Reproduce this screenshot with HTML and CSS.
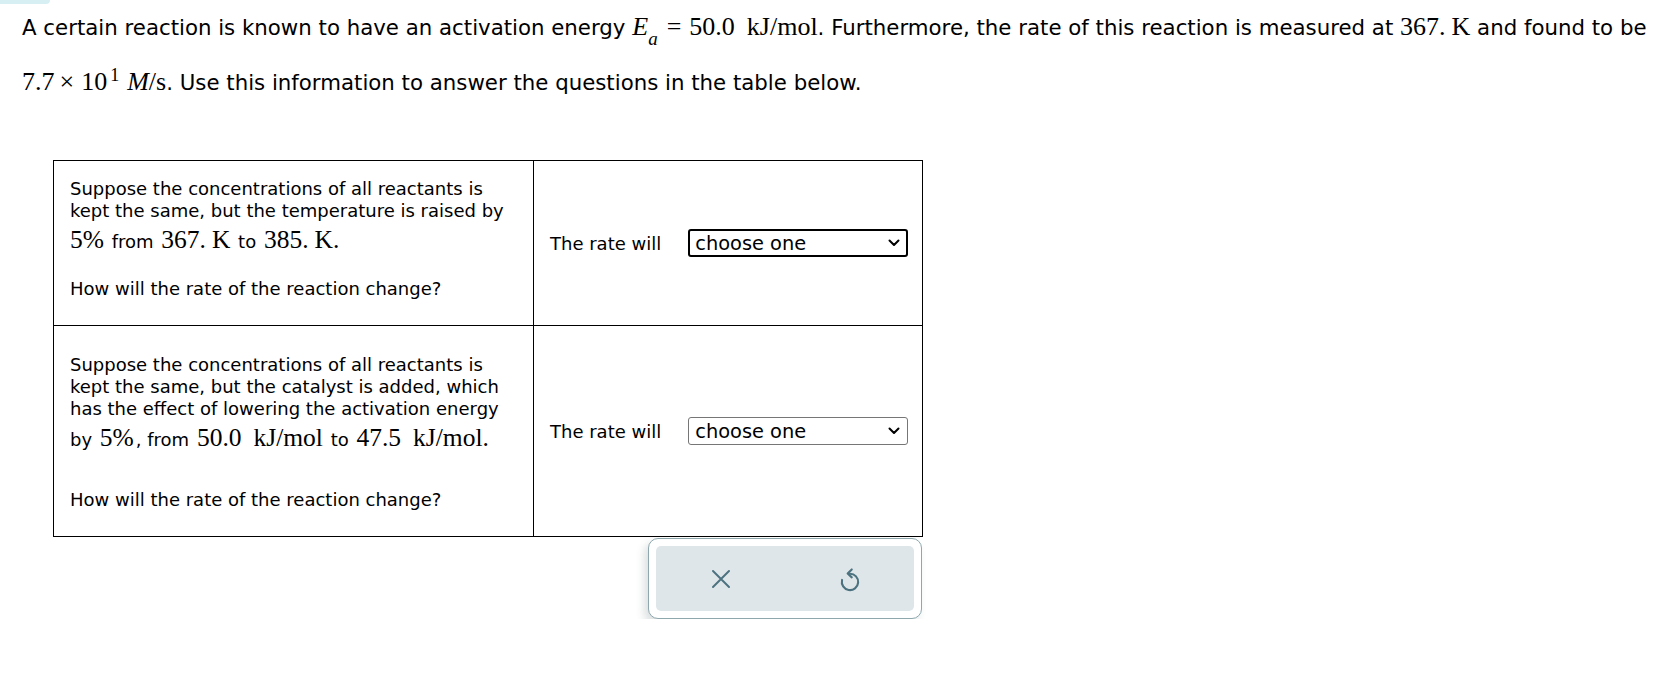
FILE: index.html
```html
<!DOCTYPE html>
<html lang="en">
<head>
<meta charset="utf-8">
<title>Activation energy question</title>
<link rel="stylesheet" href="styles.css">
</head>
<body>
<div class="corner"></div>
<div class="intro">
  <div class="intro-line first">A certain reaction is known to have an activation energy <span class="m"><i>E</i><span class="sub"><i>a</i></span><span class="eq">=</span>50.0<span class="unit">kJ/mol</span></span>. Furthermore, the rate of this reaction is measured at <span class="m">367.<span class="gap">K</span></span> and found to be</div>
  <div class="intro-line second"><span class="m">7.7<span class="times">×</span>10<span class="sup">1</span><span class="var"><i>M</i>/s</span></span>. Use this information to answer the questions in the table below.</div>
</div>

<div class="qgrid">
  <div class="cell q q1">
    <div class="ln">Suppose the concentrations of all reactants is</div>
    <div class="ln">kept the same, but the temperature is raised by</div>
    <div class="ln ln-math"><span class="mt first">5%</span> from <span class="mt">367.<span class="gap">K</span></span> to <span class="mt">385.<span class="gap">K.</span></span></div>
    <div class="ln ask ask1">How will the rate of the reaction change?</div>
  </div>
  <div class="cell a">
    <span class="label">The rate will</span>
    <div class="select focused"><span>choose one</span><svg class="chev" viewBox="0 0 12 8" width="12" height="8"><path d="M1.5 1.5 L6 6 L10.5 1.5" fill="none" stroke="#000" stroke-width="2" stroke-linecap="round" stroke-linejoin="round"/></svg></div>
  </div>
  <div class="cell q q2">
    <div class="ln">Suppose the concentrations of all reactants is</div>
    <div class="ln">kept the same, but the catalyst is added, which</div>
    <div class="ln">has the effect of lowering the activation energy</div>
    <div class="ln ln-math">by <span class="mt">5%</span>, from <span class="mt">50.0<span class="unit-s">kJ/mol</span></span> to <span class="mt">47.5<span class="unit-s">kJ/mol.</span></span></div>
    <div class="ln ask ask2">How will the rate of the reaction change?</div>
  </div>
  <div class="cell a">
    <span class="label">The rate will</span>
    <div class="select"><span>choose one</span><svg class="chev" viewBox="0 0 12 8" width="12" height="8"><path d="M1.5 1.5 L6 6 L10.5 1.5" fill="none" stroke="#000" stroke-width="2" stroke-linecap="round" stroke-linejoin="round"/></svg></div>
  </div>
</div>

<div class="tools">
  <div class="tools-inner">
    <button class="tool" type="button" aria-label="Clear">
      <svg viewBox="0 0 20 20" width="20" height="20"><path d="M2 2 L18 18 M18 2 L2 18" fill="none" stroke="#4c7280" stroke-width="2" stroke-linecap="round"/></svg>
    </button>
    <button class="tool" type="button" aria-label="Undo">
      <svg viewBox="0 0 24 24" width="28" height="28"><path d="M12 7.5 A7 7 0 1 1 5.2 12.8" fill="none" stroke="#4c7280" stroke-width="1.8" stroke-linecap="round"/><path d="M13.5 3.8 L10 7.3 L13.5 10.6" fill="none" stroke="#4c7280" stroke-width="1.8" stroke-linecap="round" stroke-linejoin="round"/></svg>
    </button>
  </div>
</div>
</body>
</html>
```

FILE: styles.css
```css
body {
  margin: 0;
  font-family: "DejaVu Sans", Verdana, sans-serif;
  color: #000;
  background: #fff;
}

.corner {
  position: absolute;
  left: 0;
  top: 0;
  width: 50px;
  height: 4px;
  background: #d7eff3;
  border-bottom-right-radius: 6px;
}

.intro {
  padding-left: 22px;
  font-size: 21.3px;
}

.intro-line {
  white-space: nowrap;
}

.intro-line.first {
  line-height: 55px;
}

.intro-line.second {
  line-height: 55px;
}

.m {
  font-family: "Liberation Serif", "Times New Roman", serif;
  font-size: 26px;
  line-height: 1;
}

.m i {
  font-style: italic;
}

.sub {
  font-size: 19px;
  position: relative;
  top: 10px;
}

.eq {
  margin-left: 9px;
  margin-right: 8px;
}

.unit {
  margin-left: 12px;
}

.gap {
  margin-left: 6px;
}

.times {
  margin: 0 7px 0 5px;
}

.sup {
  font-size: 18px;
  position: relative;
  top: -9px;
  margin-left: 3px;
}

.var {
  margin-left: 8px;
}

.qgrid {
  display: grid;
  grid-template-columns: 480px 389px;
  width: max-content;
  margin: 50px 0 0 53px;
  border-left: 1px solid #000;
  border-top: 1px solid #000;
  font-size: 18px;
}

.cell {
  border-right: 1px solid #000;
  border-bottom: 1px solid #000;
}

.q1 {
  padding: 17px 16px 25px;
}

.q2 {
  padding: 28px 16px 25px;
}

.ln {
  height: 22px;
  line-height: 22px;
  white-space: nowrap;
}

.ln-math {
  height: 40px;
  line-height: 40px;
}

.mt {
  font-family: "Liberation Serif", "Times New Roman", serif;
  font-size: 25.5px;
  line-height: 1;
  margin: 0 2px;
}

.mt.first {
  margin-left: 0;
}

.unit-s {
  margin-left: 12px;
}

.ask1 {
  margin-top: 16px;
}

.ask2 {
  margin-top: 29px;
}

.a {
  display: flex;
  align-items: center;
  padding-left: 16px;
  gap: 27px;
}

.label {
  white-space: nowrap;
}

.select {
  box-sizing: border-box;
  width: 220px;
  height: 28px;
  display: flex;
  align-items: center;
  justify-content: space-between;
  border: 1px solid #767676;
  border-radius: 3px;
  padding: 0 7px 0 6px;
  font-size: 19.4px;
  background: #fff;
}

.select.focused {
  border: 2px solid #000;
  padding: 0 6px 0 5px;
}

.chev {
  display: block;
}

.tools {
  box-sizing: border-box;
  width: 274px;
  height: 81px;
  margin: 1px 0 0 648px;
  padding: 7px;
  border: 1px solid #8ea8ae;
  border-radius: 10px;
  background: #fff;
  box-shadow: -4px 5px 9px rgba(40, 60, 70, 0.16);
}

.tools-inner {
  display: flex;
  height: 100%;
  background: #dfe6e9;
  border-radius: 5px;
}

.tool {
  flex: 1;
  display: flex;
  align-items: center;
  justify-content: center;
  border: 0;
  background: transparent;
  padding: 0;
}

.tool svg {
  display: block;
}
```
